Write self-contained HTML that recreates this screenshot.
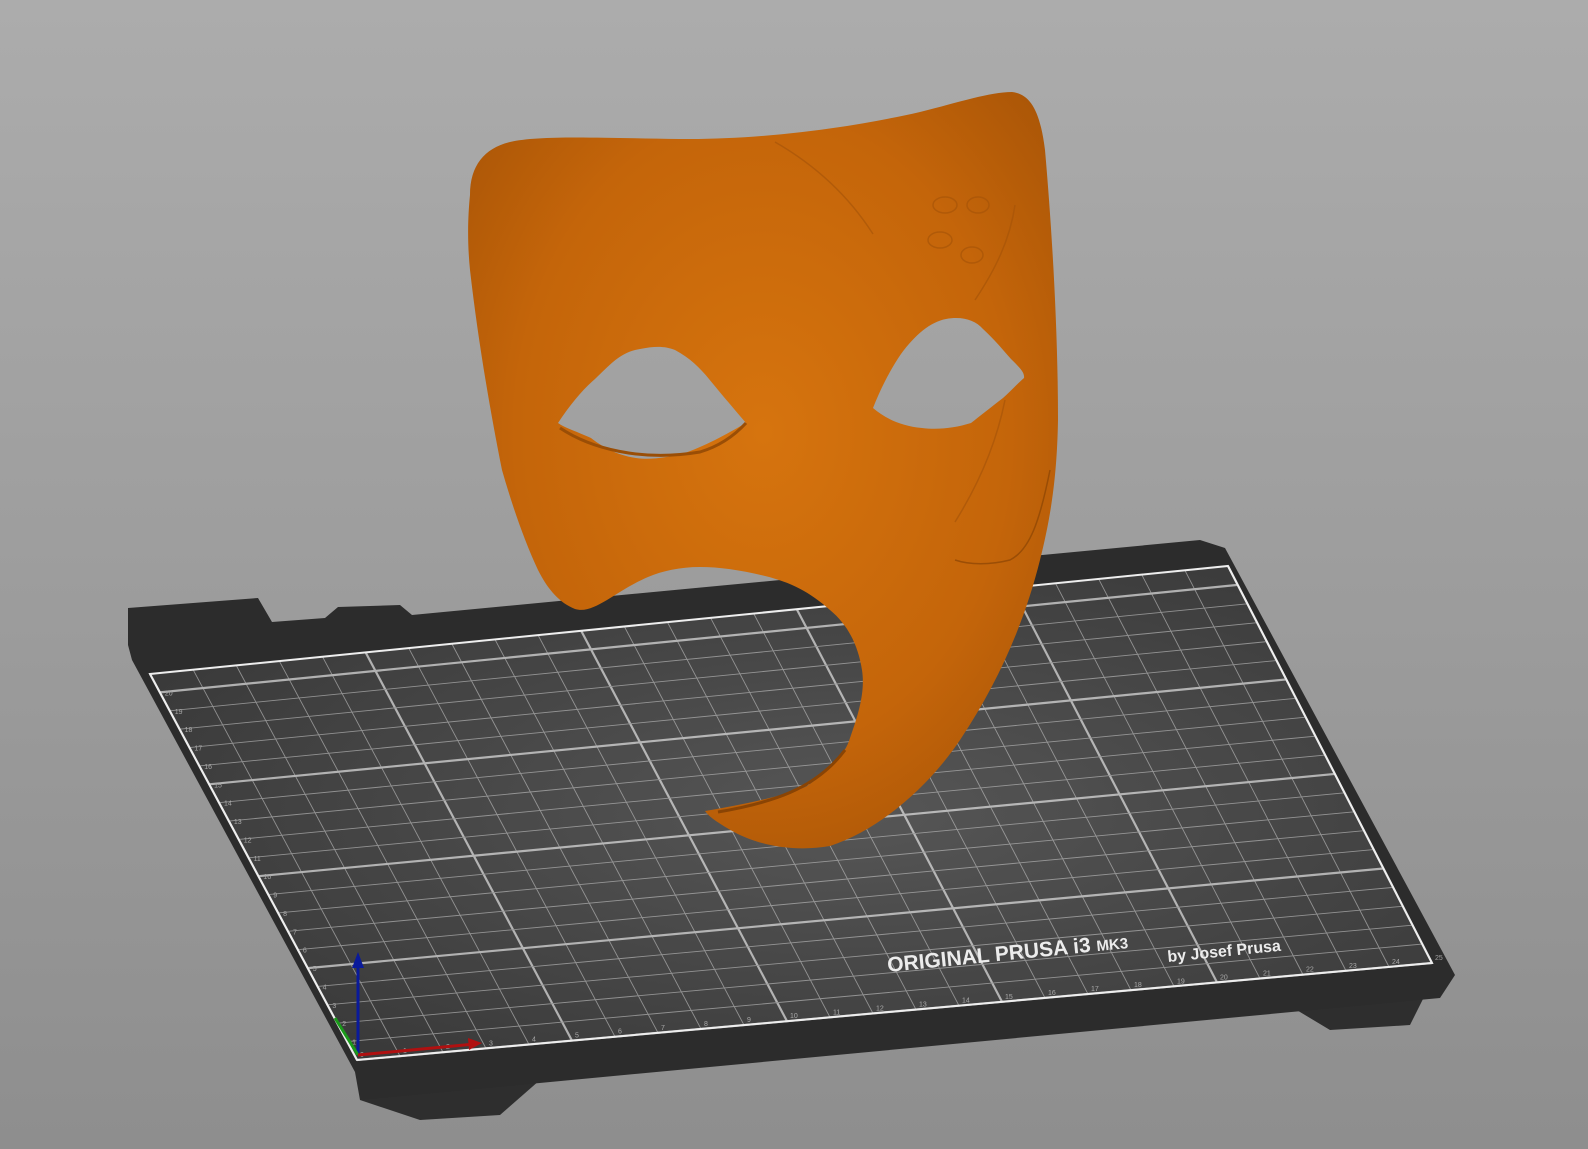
<!DOCTYPE html>
<html><head><meta charset="utf-8"><style>
html,body{margin:0;padding:0;width:1588px;height:1149px;overflow:hidden;background:#999}
svg{display:block}
</style></head><body>
<svg id="s" width="1588" height="1149" viewBox="0 0 1588 1149" xmlns="http://www.w3.org/2000/svg">
<defs>
<linearGradient id="bg" x1="0" y1="0" x2="0" y2="1">
<stop offset="0" stop-color="#acacac"/><stop offset="0.5" stop-color="#9d9d9d"/><stop offset="1" stop-color="#8e8e8e"/>
</linearGradient>
<radialGradient id="bed" cx="0.55" cy="0.5" r="0.65">
<stop offset="0" stop-color="#565656"/><stop offset="1" stop-color="#383838"/>
</radialGradient>
<radialGradient id="or" cx="0.5" cy="0.45" r="0.7">
<stop offset="0" stop-color="#d6740e"/><stop offset="0.6" stop-color="#c4650a"/><stop offset="1" stop-color="#a45206"/>
</radialGradient>
</defs>
<rect width="1588" height="1149" fill="url(#bg)"/>
<polygon points="360,1070 540,1080 500,1115 420,1120 360,1100" fill="#2e2e2e"/>
<polygon points="1280,1000 1430,985 1410,1025 1330,1030" fill="#2e2e2e"/>
<polygon points="128,608 258,598 272,622 325,618 338,607 400,605 412,615 1200,540 1225,548 1455,975 1440,998 360,1100 355,1072 132,660 128,645" fill="#2c2c2c"/>
<polygon points="150,674 1228,566 1432,963 357,1060" fill="url(#bed)"/>
<g id="grid" stroke="#bdbdbd" stroke-width="1" opacity="0.65"></g>
<polygon points="150,674 1228,566 1432,963 357,1060" fill="none" stroke="#eee" stroke-width="2"/>
<text x="888" y="972" fill="#ececec" font-family="Liberation Sans,sans-serif" font-weight="bold" font-size="21" transform="rotate(-5.7 888 972)">ORIGINAL PRUSA i3 <tspan font-size="15">MK3</tspan></text>
<text x="1168" y="962" fill="#ececec" font-family="Liberation Sans,sans-serif" font-weight="bold" font-size="16" transform="rotate(-5.7 1168 962)">by Josef Prusa</text>
<line x1="358" y1="1055" x2="358" y2="965" stroke="#0a1a9a" stroke-width="3"/>
<polygon points="352,968 364,968 358,952" fill="#0a1a9a"/>
<line x1="358" y1="1055" x2="335" y2="1018" stroke="#1a9a1a" stroke-width="3"/>
<line x1="358" y1="1055" x2="475" y2="1044" stroke="#b01010" stroke-width="3"/>
<polygon points="468,1038 482,1043 469,1050" fill="#b01010"/>
<path fill-rule="evenodd" fill="url(#or)" d="M470,195 C470,165 485,148 510,142 C540,135 600,138 680,139 C760,140 850,128 920,112 C960,102 990,92 1012,92 C1030,94 1040,110 1045,150 C1052,230 1058,330 1058,420 C1057,480 1050,520 1040,560 C1025,620 1000,680 960,740 C930,785 880,830 830,846 C795,852 760,846 734,832 C720,824 710,818 705,811 C740,805 790,795 807,786 C830,770 845,755 850,738 C860,710 865,690 862,670 C858,645 848,625 830,610 C810,592 790,582 765,576 C740,570 720,567 700,567 C680,567 662,571 648,577 C632,584 620,592 607,600 C595,607 585,612 575,609 C560,603 548,590 538,570 C524,540 512,505 502,470 C490,410 478,340 470,270 C467,240 468,215 470,195 Z
M558,423 C570,405 582,390 595,379 C610,365 620,352 640,349 C655,346 665,346 675,350 C690,358 700,368 709,379 C722,395 735,410 746,423 C730,432 710,444 685,453 C665,458 650,460 636,458 C615,455 600,445 591,438 C578,432 565,428 558,423 Z
M873,408 C880,390 890,370 901,354 C915,335 930,322 946,319 C962,316 975,320 983,329 C995,340 1003,350 1011,359 C1018,366 1025,372 1024,378 C1015,386 1010,392 1003,398 C990,408 980,416 971,423 C955,428 938,430 922,428 C900,426 885,418 873,408 Z"/>
<path d="M775,142 C815,165 848,195 873,234" stroke="#a85508" stroke-width="1.5" fill="none" opacity="0.7"/>
<path d="M718,812 C770,803 815,790 845,750" stroke="#8a4404" stroke-width="3" fill="none"/>
<path d="M560,428 C590,448 640,462 700,452 C720,446 735,435 746,423" stroke="#9a4e06" stroke-width="3" fill="none"/>
<path d="M1005,400 C995,450 975,490 955,522" stroke="#a85508" stroke-width="1.5" fill="none" opacity="0.7"/>
<path d="M1050,470 C1040,520 1030,550 1010,560 C990,565 970,565 955,560" stroke="#8a4404" stroke-width="1.5" fill="none" opacity="0.7"/>
<g stroke="#a85508" stroke-width="1.5" fill="none" opacity="0.7">
<ellipse cx="945" cy="205" rx="12" ry="8"/><ellipse cx="978" cy="205" rx="11" ry="8"/><ellipse cx="940" cy="240" rx="12" ry="8"/><ellipse cx="972" cy="255" rx="11" ry="8"/>
<path d="M1015,205 C1010,240 995,270 975,300"/>
</g>
</svg>
<script>
var g=document.getElementById('grid');
var TL=[150,674],TR=[1228,566],BR=[1432,963],BL=[357,1060];
function L(a,b,t){return [a[0]+(b[0]-a[0])*t,a[1]+(b[1]-a[1])*t];}
var h='';
for(var i=0;i<=25;i++){var u=i/25,p=L(TL,TR,u),q=L(BL,BR,u);
h+='<line x1="'+p[0]+'" y1="'+p[1]+'" x2="'+q[0]+'" y2="'+q[1]+'" stroke-width="'+(i%5==0?2.2:0.9)+'"'+(i%5==0?' stroke="#eee"':'')+'/>';}
for(var j=0;j<=21;j++){var v=j/21,p=L(BL,TL,v),q=L(BR,TR,v);
h+='<line x1="'+p[0]+'" y1="'+p[1]+'" x2="'+q[0]+'" y2="'+q[1]+'" stroke-width="'+(j%5==0?2.2:0.9)+'"'+(j%5==0?' stroke="#eee"':'')+'/>';}
for(var i=0;i<=25;i++){var q=L(BL,BR,i/25);h+='<text x="'+(q[0]+3)+'" y="'+(q[1]-3)+'" font-size="7" fill="#ddd" stroke="none" font-family="Liberation Sans">'+i+'</text>';}
for(var j=1;j<=20;j++){var p=L(BL,TL,j/21);h+='<text x="'+(p[0]+5)+'" y="'+(p[1]+3)+'" font-size="7" fill="#ddd" stroke="none" font-family="Liberation Sans">'+j+'</text>';}
g.innerHTML=h;
</script>
</body></html>
